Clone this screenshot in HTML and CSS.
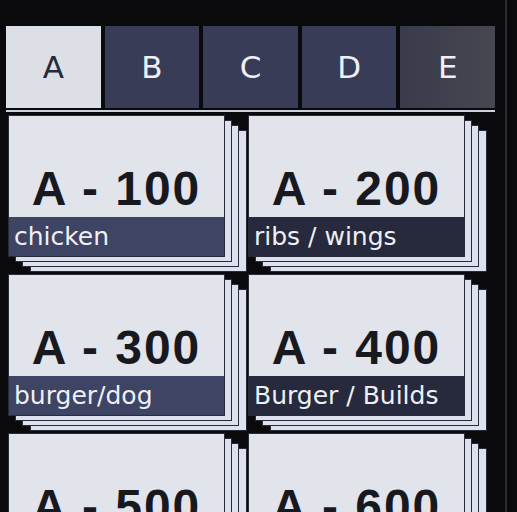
FILE: index.html
```html
<!DOCTYPE html>
<html lang="en">
<head>
<meta charset="utf-8">
<title>Menu A</title>
<link rel="stylesheet" href="styles.css">
</head>
<body>
<div class="page">
  <div class="tabs">
    <div class="tab active">A</div>
    <div class="tab">B</div>
    <div class="tab">C</div>
    <div class="tab">D</div>
    <div class="tab tab-e">E</div>
  </div>
  <div class="rule"></div>
  <div class="grid">
    <div class="card">
      <div class="title">A - 100</div>
      <div class="label label-blue">chicken</div>
    </div>
    <div class="card">
      <div class="title">A - 200</div>
      <div class="label label-dark">ribs / wings</div>
    </div>
    <div class="card">
      <div class="title">A - 300</div>
      <div class="label label-blue">burger/dog</div>
    </div>
    <div class="card">
      <div class="title">A - 400</div>
      <div class="label label-dark">Burger / Builds</div>
    </div>
    <div class="card">
      <div class="title">A - 500</div>
      <div class="label label-blue">sides</div>
    </div>
    <div class="card">
      <div class="title">A - 600</div>
      <div class="label label-dark">drinks</div>
    </div>
  </div>
</div>
</body>
</html>
```

FILE: styles.css
```css
html, body {
  margin: 0;
  padding: 0;
}

body {
  width: 517px;
  height: 512px;
  overflow: hidden;
  background: #0a0a0c linear-gradient(to right, transparent 505px, #2b2b30 505px, #2b2b30 507px, transparent 507px);
  font-family: "DejaVu Sans", sans-serif;
}

.page {
  width: 489px;
  padding: 26px 0 0 6px;
}

.tabs {
  display: flex;
  gap: 4px;
  height: 82px;
}

.tab {
  flex: 1;
  display: flex;
  align-items: center;
  justify-content: center;
  background: #383c57;
  color: #eef0f6;
  font-family: "DejaVu Sans", sans-serif;
  font-size: 31px;
}

.tab.active {
  background: #dcdfe6;
  color: #262a3a;
}

.tab-e {
  background: linear-gradient(to right, #393b4c, #46474f);
}

.rule {
  height: 2px;
  margin-top: 2px;
  background: #cdd1dd;
}

.grid {
  display: grid;
  grid-template-columns: 240px 240px;
  grid-auto-rows: 159px;
  margin-top: 3px;
  padding-left: 2px;
}

.card {
  width: 217px;
  height: 142px;
  box-sizing: border-box;
  display: flex;
  flex-direction: column;
  background: #e1e4eb;
  border: 1px solid #2a2b36;
  box-shadow:
    7px 5px 0 -1px #dde0ef,
    7px 5px 0 0 #2a2b36,
    14px 10px 0 -1px #dde0ef,
    14px 10px 0 0 #2a2b36,
    22px 15px 0 -1px #dde0ef,
    22px 15px 0 0 #2a2b36;
}

.title {
  height: 101px;
  box-sizing: border-box;
  padding-top: 49px;
  text-align: center;
  font-family: "Liberation Sans", Arial, sans-serif;
  font-weight: bold;
  font-size: 48px;
  line-height: 48px;
  letter-spacing: 2px;
  color: #18191f;
}

.label {
  height: 39px;
  padding-left: 5px;
  font-family: "DejaVu Sans", sans-serif;
  font-size: 25px;
  line-height: 40px;
  color: #eef0f6;
  white-space: nowrap;
}

.label-blue {
  background: #3d4464;
}

.label-dark {
  background: #27293d;
}
```
